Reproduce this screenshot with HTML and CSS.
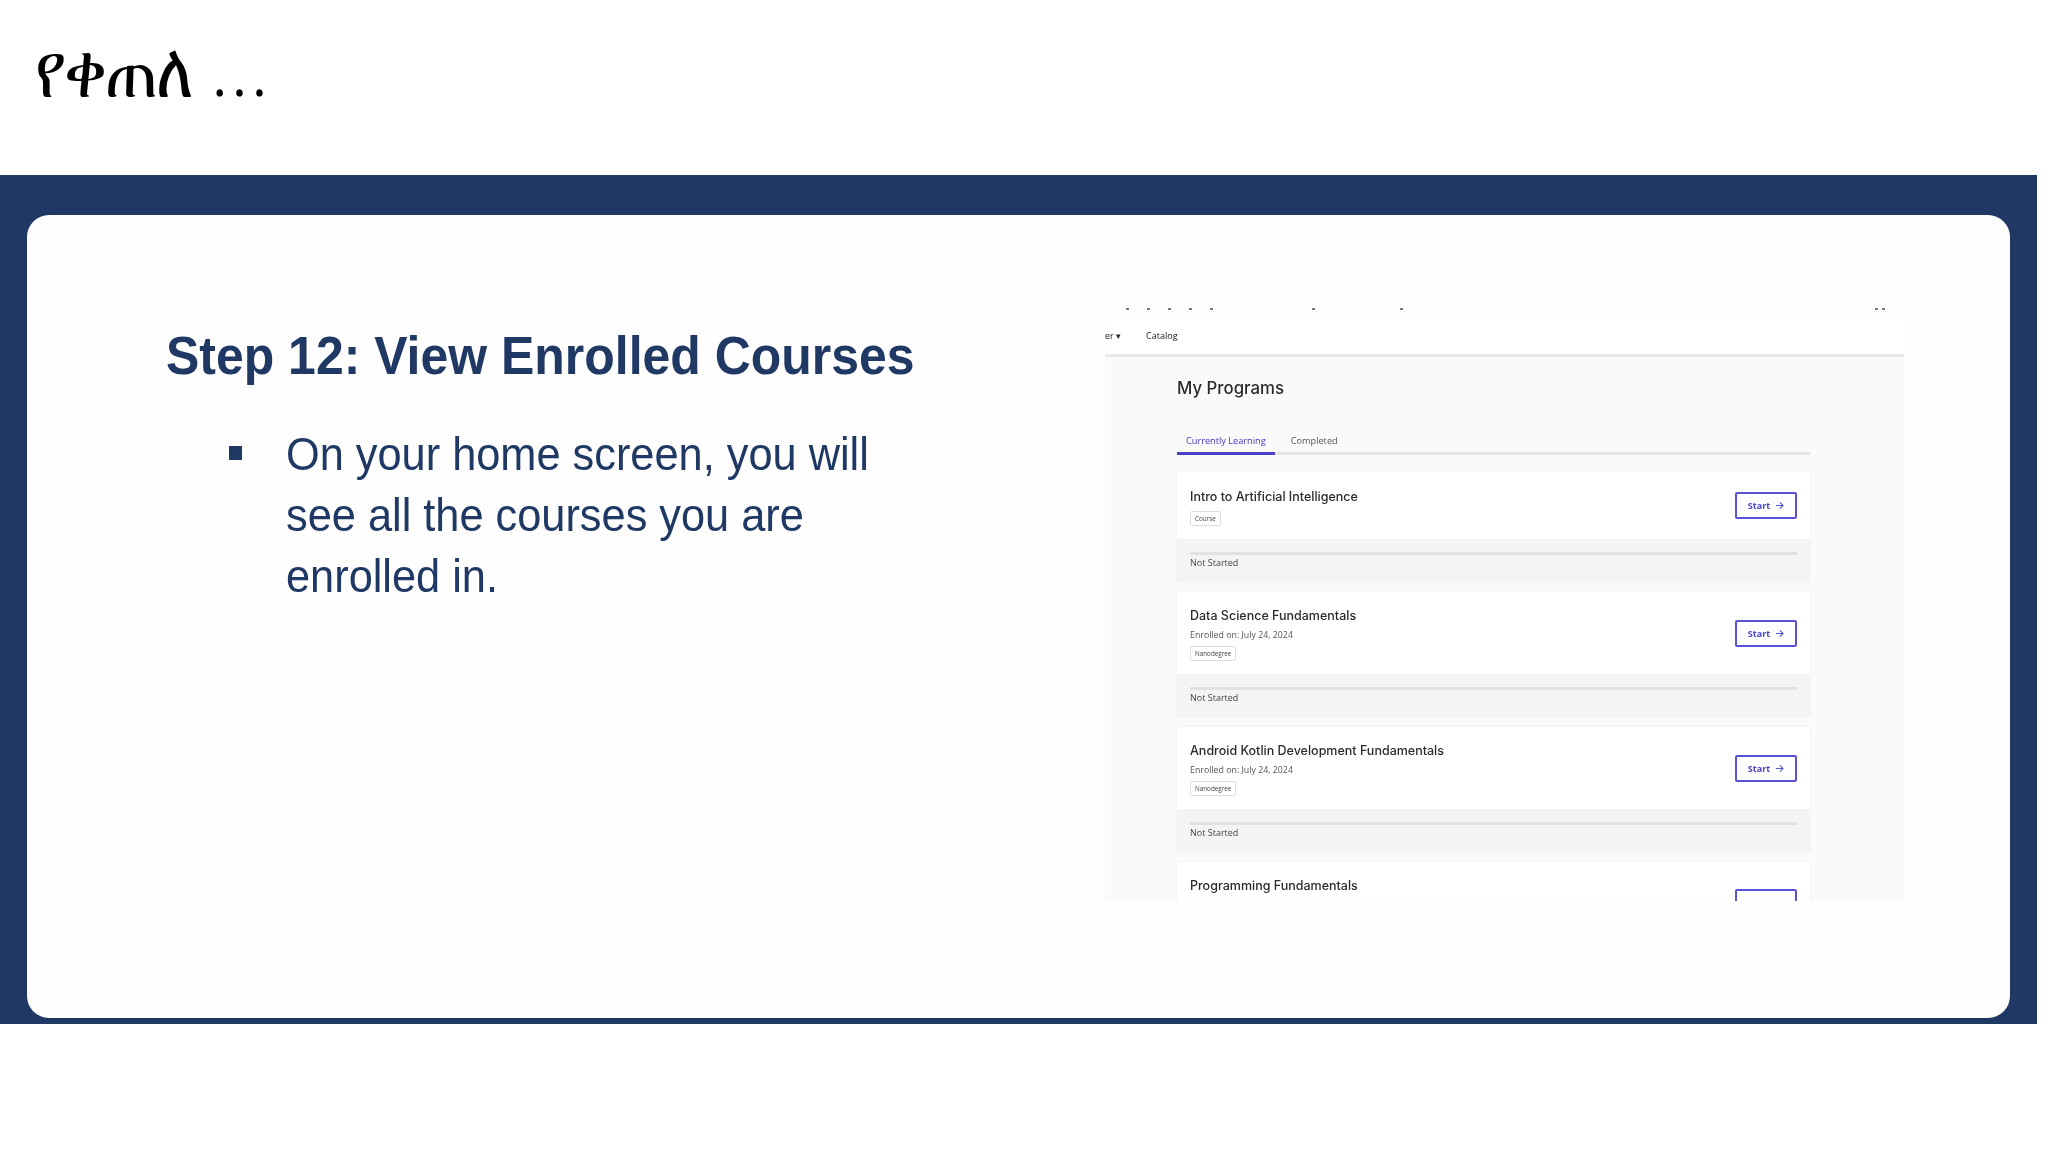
FILE: index.html
```html
<!DOCTYPE html>
<html>
<head>
    <meta charset="UTF-8">
    <title>የቀጠለ ...</title>
    <link rel="stylesheet" href="styles.css">
</head>
<body>
    <div class="slide-header">
        <h1 class="slide-title"><span class="title-word">የቀጠለ</span> <span class="ellipsis">...</span></h1>
    </div>

    <div class="band">
        <div class="card">
            <div class="step">
                <h2 class="step-title">Step 12: View Enrolled Courses</h2>
                <div class="step-point">
                    <span class="bullet"></span>
                    <p class="step-text">On your home screen, you will see all the courses you are enrolled in.</p>
                </div>
            </div>

            <!-- screenshot inside the slide -->
            <div class="shot">
                <div class="shot-strip">
                    <div class="dots">
                        <i></i><i></i><i></i><i></i><i></i>
                    </div>
                    <i class="strip-mark"></i>
                    <i class="strip-mark strip-mark-far"></i>
                    <div class="dots dots-right"><i></i><i></i></div>
                </div>
                <div class="shot-nav">
                    <span>er ▾</span>
                    <span>Catalog</span>
                </div>
                <div class="shot-body">
                    <div class="shot-heading">My Programs</div>
                    <div class="tabs">
                        <span class="tab tab-active">Currently Learning</span>
                        <span class="tab">Completed</span>
                    </div>

                    <div class="program">
                        <div class="program-top">
                            <div>
                                <div class="program-name">Intro to Artificial Intelligence</div>
                                <span class="tag">Course</span>
                            </div>
                            <span class="start-btn">Start
                                <svg width="9" height="9" viewBox="0 0 10 10"><path d="M1 5h8M5.500 1.500L9 5 5.500 8.500" fill="none" stroke="#5a5ad0" stroke-width="1.200"/></svg>
                            </span>
                        </div>
                        <div class="program-foot">
                            <div class="progress"></div>
                            <div class="status">Not Started</div>
                        </div>
                    </div>

                    <div class="program">
                        <div class="program-top">
                            <div>
                                <div class="program-name">Data Science Fundamentals</div>
                                <div class="enrolled">Enrolled on: July 24, 2024</div>
                                <span class="tag">Nanodegree</span>
                            </div>
                            <span class="start-btn">Start
                                <svg width="9" height="9" viewBox="0 0 10 10"><path d="M1 5h8M5.500 1.500L9 5 5.500 8.500" fill="none" stroke="#5a5ad0" stroke-width="1.200"/></svg>
                            </span>
                        </div>
                        <div class="program-foot">
                            <div class="progress"></div>
                            <div class="status">Not Started</div>
                        </div>
                    </div>

                    <div class="program">
                        <div class="program-top">
                            <div>
                                <div class="program-name">Android Kotlin Development Fundamentals</div>
                                <div class="enrolled">Enrolled on: July 24, 2024</div>
                                <span class="tag">Nanodegree</span>
                            </div>
                            <span class="start-btn">Start
                                <svg width="9" height="9" viewBox="0 0 10 10"><path d="M1 5h8M5.500 1.500L9 5 5.500 8.500" fill="none" stroke="#5a5ad0" stroke-width="1.200"/></svg>
                            </span>
                        </div>
                        <div class="program-foot">
                            <div class="progress"></div>
                            <div class="status">Not Started</div>
                        </div>
                    </div>

                    <div class="program">
                        <div class="program-top program-top-cut">
                            <div class="program-name">Programming Fundamentals</div>
                            <span class="start-btn"></span>
                        </div>
                    </div>
                </div>
            </div>
        </div>
    </div>
</body>
</html>
```

FILE: styles.css
```css
html, body {
    margin: 0;
    padding: 0;
    background: #fff;
}
body {
    width: 2048px;
    height: 1152px;
    overflow: hidden;
    font-family: "Liberation Sans", Arial, sans-serif;
}
.slide-header {
    height: 175px;
    box-sizing: border-box;
    padding: 30px 0 0 35px;
}
.slide-title {
    margin: 0;
    font-family: "Noto Sans", "DejaVu Sans", sans-serif;
    font-size: 64px;
    font-weight: normal;
    line-height: 84px;
    letter-spacing: -2px;
    color: #000;
}
.title-word {
    display: inline-block;
    transform: scaleY(1.2);
    transform-origin: 0 72%;
}
.ellipsis {
    font-size: 52px;
    letter-spacing: 6px;
    margin-left: 6px;
}
.band {
    width: 2037px;
    height: 849px;
    box-sizing: border-box;
    padding: 40px 27px 6px;
    background: #1f3864;
}
.card {
    display: flex;
    justify-content: space-between;
    height: 100%;
    box-sizing: border-box;
    padding: 88px 106px 0 139px;
    background: #fefefe;
    border-radius: 22px;
}
.step {
    width: 780px;
    padding-top: 21px;
    color: #1f3864;
}
.step-title {
    margin: 0;
    font-size: 54px;
    font-weight: bold;
    line-height: 62px;
    white-space: nowrap;
    transform: scaleX(0.925);
    transform-origin: left;
}
.step-point {
    display: flex;
    margin-top: 38px;
    padding-left: 63px;
}
.bullet {
    flex: none;
    width: 13px;
    height: 14px;
    margin: 22px 44px 0 0;
    background: #1f3864;
}
.step-text {
    margin: 0;
    width: 640px;
    flex: none;
    font-size: 46px;
    line-height: 61px;
    transform: scaleX(0.942);
    transform-origin: left;
}

/* screenshot */
.shot {
    width: 799px;
    height: 598px;
    overflow: hidden;
    background: #fafafa;
    font-family: "Open Sans", sans-serif;
    filter: blur(0.6px);
}
.shot-strip {
    display: flex;
    align-items: center;
    height: 14px;
    padding: 0 0 2px 21px;
    box-sizing: border-box;
    background: #fdfdfd;
}
.dots {
    display: flex;
    gap: 18px;
}
.dots i, .strip-mark {
    display: block;
    flex: none;
    width: 3px;
    height: 2px;
    background: #777;
}
.strip-mark {
    margin-left: 99px;
}
.strip-mark-far {
    margin-left: 85px;
}
.dots-right {
    margin-left: 472px;
    gap: 4px;
}
.shot-nav {
    display: flex;
    gap: 25px;
    align-items: center;
    height: 37px;
    padding-top: 2px;
    box-sizing: content-box;
    margin-top: -2px;
    background: #fff;
    border-bottom: 3px solid #e9e9e9;
    font-size: 9px;
    color: #222;
}
.shot-body {
    padding: 0 0 0 72px;
    width: 633px;
}
.shot-heading {
    height: 24px;
    margin-top: 19px;
    font-family: Inter, sans-serif;
    font-size: 16.800px;
    font-weight: 500;
    line-height: 24px;
    color: #2b2b2b;
}
.tabs {
    display: flex;
    gap: 16px;
    height: 22px;
    margin-top: 33px;
    margin-bottom: 17px;
    border-bottom: 3px solid #e4e4e4;
    box-sizing: border-box;
    font-size: 9.200px;
}
.tab {
    padding: 0 9px;
    height: 19px;
    line-height: 15px;
    color: #555;
}
.tab-active {
    color: #4038c8;
    border-bottom: 3px solid #4a43c9;
}
.tab:last-child {
    padding-left: 0;
}
.program {
    margin-bottom: 10px;
    background: #f4f4f4;
    border-radius: 3px;
    box-shadow: 0 0 2px rgba(0, 0, 0, 0.08);
}
.program-top {
    display: flex;
    justify-content: space-between;
    align-items: center;
    min-height: 67px;
    box-sizing: border-box;
    padding: 0 13px;
    background: #fff;
}
.program-top > div:first-child {
    padding: 15px 0 13px;
}
.program-top-cut {
    align-items: flex-start;
}
.program-top > .program-name:first-child {
    padding-top: 15px;
}
.program-name {
    font-family: Inter, sans-serif;
    font-size: 12.500px;
    font-weight: 500;
    line-height: 18px;
    color: #2b2b2b;
}
.enrolled {
    margin-top: 3px;
    font-size: 8.800px;
    line-height: 14px;
    color: #555;
}
.tag {
    display: block;
    width: fit-content;
    height: 15px;
    margin-top: 5px;
    padding: 0 4px;
    box-sizing: border-box;
    border: 1px solid #ddd;
    border-radius: 2px;
    font-size: 6.300px;
    line-height: 13px;
    color: #444;
}
.enrolled + .tag {
    margin-top: 4px;
}
.start-btn {
    display: flex;
    align-items: center;
    justify-content: center;
    gap: 5px;
    width: 62px;
    height: 27px;
    box-sizing: border-box;
    border: 2px solid #5a52d5;
    border-radius: 2px;
    font-size: 9px;
    font-weight: bold;
    color: #4a43c9;
}
.program-top-cut .start-btn {
    margin-top: 27px;
}
.program-foot {
    height: 43px;
    padding: 13px 13px 0;
    box-sizing: border-box;
}
.progress {
    height: 3px;
    background: #e2e2e2;
}
.status {
    margin-top: 2px;
    font-size: 9px;
    line-height: 12px;
    color: #444;
}
```
